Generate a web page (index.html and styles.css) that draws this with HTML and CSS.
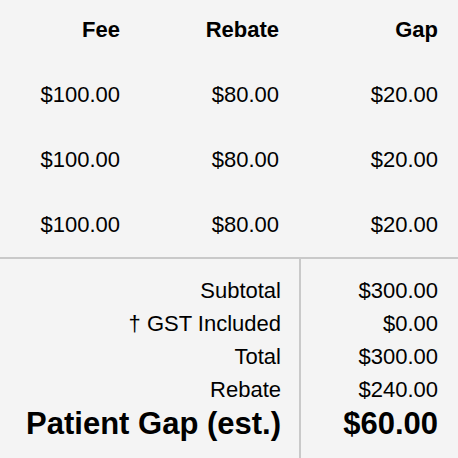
FILE: index.html
```html
<!DOCTYPE html>
<html>
<head>
<meta charset="utf-8">
<link rel="stylesheet" href="styles.css">
</head>
<body>
<div class="page">
  <div class="table">
    <div class="cell head">Fee</div>
    <div class="cell head">Rebate</div>
    <div class="cell head">Gap</div>
    <div class="cell">$100.00</div>
    <div class="cell">$80.00</div>
    <div class="cell">$20.00</div>
    <div class="cell">$100.00</div>
    <div class="cell">$80.00</div>
    <div class="cell">$20.00</div>
    <div class="cell">$100.00</div>
    <div class="cell">$80.00</div>
    <div class="cell">$20.00</div>
  </div>
  <div class="summary">
    <div class="col labels">
      <div class="row">Subtotal</div>
      <div class="row">† GST Included</div>
      <div class="row">Total</div>
      <div class="row">Rebate</div>
      <div class="row big">Patient Gap (est.)</div>
    </div>
    <div class="col values">
      <div class="row">$300.00</div>
      <div class="row">$0.00</div>
      <div class="row">$300.00</div>
      <div class="row">$240.00</div>
      <div class="row big">$60.00</div>
    </div>
  </div>
</div>
</body>
</html>
```

FILE: styles.css
```css
html, body {
  margin: 0;
  padding: 0;
  height: 100%;
  overflow: hidden;
}
body {
  background: #f4f4f4;
  color: #000;
  font-family: "Liberation Sans", Arial, sans-serif;
  font-size: 22px;
}
.page {
  display: flex;
  flex-direction: column;
  height: 100vh;
}
.table {
  display: grid;
  grid-template-columns: 1fr 159px 159px;
  grid-auto-rows: 65px;
  align-items: center;
  padding-right: 20px;
  margin-top: -3px;
  border-bottom: 2px solid #c9c9c9;
}
.cell {
  text-align: right;
}
.head {
  font-weight: bold;
}
.summary {
  flex: 1;
  display: grid;
  grid-template-columns: 301px 1fr;
}
.col {
  display: flex;
  flex-direction: column;
  padding-top: 15.4px;
  text-align: right;
}
.labels {
  border-right: 2px solid #c9c9c9;
  padding-right: 18px;
}
.values {
  padding-right: 20px;
}
.row {
  line-height: 33px;
}
.row.big {
  font-size: 31px;
  font-weight: bold;
  line-height: 35px;
}
```
